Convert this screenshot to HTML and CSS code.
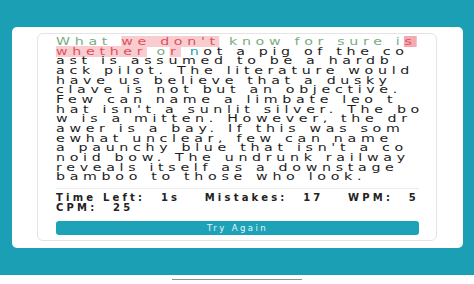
FILE: index.html
```html
<html>

<head>
   <title>Typing Test</title>
   <link rel="stylesheet" href="styles.css">
</head>

<body>
   <div class="screen">
      <div class="card">
         <div class="box">
            <p class="passage"><span class="ok">What </span><span class="bad">we don't</span><span class="ok"> know for sure i</span><span class="bad cur-bad">s</span><br><span class="bad">whether</span><span class="ok"> o</span><span class="bad">r</span> <span class="cur">n</span>ot a pig of the co<br>ast is assumed to be a hardb<br>ack pilot. The literature would<br>have us believe that a dusky<br>clave is not but an objective.<br>Few can name a limbate leo t<br>hat isn't a sunlit silver. The bo<br>w is a mitten. However, the dr<br>awer is a bay. If this was som<br>ewhat unclear, few can name<br>a paunchy blue that isn't a co<br>noid bow. The undrunk railway<br>reveals itself as a downstage<br>bamboo to those who look.</p>
            <div class="stats">
               <span class="stat">Time Left: <b>1s</b></span>
               <span class="stat">Mistakes: <b>17</b></span>
               <span class="stat">WPM: <b>5</b></span>
               <span class="stat">CPM: <b>25</b></span>
            </div>
            <button class="btn">Try Again</button>
         </div>
      </div>
   </div>
   <div class="homebar"><div class="handle"></div></div>
</body>

</html>
```
FILE: styles.css
```css
body {
   margin: 0;
   background: #fff;
   font-family: "DejaVu Sans", sans-serif;
}

.screen {
   height: 275px;
   box-sizing: border-box;
   background: #1b9fb4;
   padding: 27px 11px 0 12px;
}

.card {
   background: #fff;
   border-radius: 5px;
   height: 221px;
   box-sizing: border-box;
   padding: 6px 26px 7px 25px;
}

.box {
   height: 208px;
   box-sizing: border-box;
   border: 1px solid #e4e4e4;
   border-radius: 6px;
   padding: 3px 17px 0 18px;
}

/* the glyphs in the capture are stretched sideways */
.passage {
   width: 256px;
   margin: 0 0 6px;
   font-size: 10px;
   line-height: 9.65px;
   letter-spacing: 3.3px;
   color: #1d1d1d;
   white-space: nowrap;
   transform: scaleX(1.42);
   transform-origin: 0 0;
}

.ok {
   color: #7aac84;
}

.bad {
   color: #e0505e;
   background: #f9ccd0;
}

.cur-bad {
   background: #f5a9b0;
}

.cur {
   color: #1b9fb4;
}

.stats {
   border-top: 1px solid #ececec;
   padding-top: 4px;
   display: flex;
   flex-wrap: wrap;
   justify-content: space-between;
   font-size: 10px;
   line-height: 10px;
   letter-spacing: 3.2px;
   color: #222;
   font-weight: bold;
}

.stat b {
   margin-left: 9px;
}

.btn {
   display: block;
   width: 100%;
   height: 14px;
   margin-top: 8px;
   border: none;
   border-radius: 3px;
   background: #1ea2b7;
   color: #e8f6f8;
   font-family: "DejaVu Sans", sans-serif;
   font-size: 8.5px;
   letter-spacing: 2.4px;
   padding: 0;
}

.homebar {
   height: 9px;
   display: flex;
   justify-content: center;
   padding-top: 4px;
   box-sizing: border-box;
}

.handle {
   width: 130px;
   height: 1px;
   background: #8f8f8f;
}
```
